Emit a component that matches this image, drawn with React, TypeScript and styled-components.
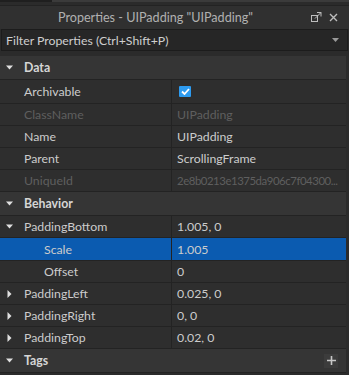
import React from "react";
import styled, { createGlobalStyle } from "styled-components";

const GlobalStyle = createGlobalStyle`
  html, body {
    margin: 0;
    padding: 0;
    background: #2b2b2b;
  }
  body {
    font-family: Lato, "Noto Sans", sans-serif;
    font-size: 12.3px;
  }
`;

const Panel = styled.div`
  width: 349px;
  height: 375px;
  background: #2b2b2b;
  display: flex;
  flex-direction: column;
  overflow: hidden;
`;

const TopStrip = styled.div`
  height: 6px;
  display: flex;
  border-bottom: 1px solid #232323;
  box-sizing: border-box;
`;

const StripPart = styled.div<{ $dark?: boolean }>`
  height: 2px;
  flex: ${(p) => (p.$dark ? "0 0 52px" : "1")};
  background: ${(p) => (p.$dark ? "#1f1f1f" : "#3b3b3b")};
`;

const TitleBar = styled.div`
  height: 23px;
  display: flex;
  align-items: center;
  background: #303030;
  padding: 0 11px 0 0;
`;

const Title = styled.div`
  flex: 1;
  text-align: center;
  color: #b0b0b0;
  font-size: 12.6px;
`;

const TitleIcons = styled.div`
  display: flex;
  align-items: center;
  gap: 7px;
`;

const FilterBox = styled.div`
  height: 22px;
  margin: 0 1px;
  box-sizing: border-box;
  border: 1px solid #1c1c1c;
  background: #262626;
  display: flex;
  align-items: center;
  padding: 0 8px 0 4px;
  color: #cfcfcf;
`;

const FilterText = styled.div`
  flex: 1;
`;

const Gap = styled.div`
  height: 5px;
`;

const Grid = styled.div`
  display: flex;
  flex-direction: column;
  width: 346px;
`;

const CategoryRow = styled.div`
  height: 24px;
  box-sizing: border-box;
  border-bottom: 1px solid #232323;
  background: #353535;
  display: flex;
  align-items: center;
  color: #d6d6d6;
  font-weight: 700;
`;

const ArrowSlot = styled.div`
  width: 24px;
  display: flex;
  justify-content: center;
  padding-right: 5px;
  box-sizing: border-box;
`;

const Row = styled.div<{ $selected?: boolean; $tall?: boolean }>`
  height: ${(p) => (p.$tall ? "24px" : p.$selected ? "23px" : "22px")};
  box-sizing: border-box;
  border-bottom: 1px solid #232323;
  background: ${(p) => (p.$selected ? "#0b5bb0" : "#2e2e2e")};
  display: flex;
`;

const NameCell = styled.div<{ $indent?: number; $disabled?: boolean }>`
  width: 172px;
  box-sizing: border-box;
  border-right: 1px solid #232323;
  display: flex;
  align-items: center;
  padding-left: ${(p) => (p.$indent ? p.$indent : 0)}px;
  color: ${(p) => (p.$disabled ? "#5f5f5f" : "#cccccc")};
`;

const ValueCell = styled.div<{ $disabled?: boolean; $compact?: boolean }>`
  flex: 1;
  min-width: 0;
  display: flex;
  align-items: center;
  padding-left: 5px;
  color: ${(p) => (p.$disabled ? "#5f5f5f" : "#cccccc")};
  white-space: nowrap;
  font-size: ${(p) => (p.$compact ? "11.4px" : "inherit")};
  letter-spacing: ${(p) => (p.$compact ? "-0.45px" : "normal")};
`;

const Check = styled.div`
  width: 12px;
  height: 11px;
  margin-left: 2px;
  background: #2d9bf0;
  border-radius: 1px;
  display: flex;
  align-items: center;
  justify-content: center;
`;

const PlusButton = styled.div`
  margin-left: auto;
  margin-right: 8px;
  width: 14px;
  height: 14px;
  display: flex;
  align-items: center;
  justify-content: center;
  background: #3c3c3c;
`;

const Down = () => (
  <svg width="7" height="5" viewBox="0 0 7 5">
    <path d="M0 0.5 H7 L3.5 4.5 Z" fill="#e0e0e0" />
  </svg>
);

const Right = () => (
  <svg width="5" height="8" viewBox="0 0 5 8">
    <path d="M0.5 0 V8 L4.5 4 Z" fill="#e0e0e0" />
  </svg>
);

type Prop = {
  name: string;
  value?: string;
  disabled?: boolean;
  indent?: number;
  arrow?: "down" | "right";
  selected?: boolean;
  check?: boolean;
  compact?: boolean;
};

const PropRow = ({ p }: { p: Prop }) => (
  <Row $selected={p.selected} $tall={p.check}>
    <NameCell $indent={p.arrow ? 0 : p.indent ?? 24} $disabled={p.disabled}>
      {p.arrow && <ArrowSlot>{p.arrow === "down" ? <Down /> : <Right />}</ArrowSlot>}
      {p.name}
    </NameCell>
    <ValueCell $disabled={p.disabled} $compact={p.compact}>
      {p.check ? (
        <Check>
          <svg width="9" height="7" viewBox="0 0 9 7">
            <path d="M1 3.5 L3.5 6 L8 1" stroke="#fff" strokeWidth="1.8" fill="none" />
          </svg>
        </Check>
      ) : (
        p.value
      )}
    </ValueCell>
  </Row>
);

const Category = ({ name, plus }: { name: string; plus?: boolean }) => (
  <CategoryRow>
    <ArrowSlot>
      <Down />
    </ArrowSlot>
    {name}
    {plus && (
      <PlusButton>
        <svg width="9" height="9" viewBox="0 0 9 9">
          <path d="M4.5 0 V9 M0 4.5 H9" stroke="#c8c8c8" strokeWidth="1.6" />
        </svg>
      </PlusButton>
    )}
  </CategoryRow>
);

const dataProps: Prop[] = [
  { name: "Archivable", check: true },
  { name: "ClassName", value: "UIPadding", disabled: true },
  { name: "Name", value: "UIPadding" },
  { name: "Parent", value: "ScrollingFrame" },
  { name: "UniqueId", value: "2e8b0213e1375da906c7f04300...", disabled: true, compact: true },
];

const behaviorProps: Prop[] = [
  { name: "PaddingBottom", value: "1.005, 0", arrow: "down" },
  { name: "Scale", value: "1.005", indent: 44, selected: true },
  { name: "Offset", value: "0", indent: 44 },
  { name: "PaddingLeft", value: "0.025, 0", arrow: "right" },
  { name: "PaddingRight", value: "0, 0", arrow: "right" },
  { name: "PaddingTop", value: "0.02, 0", arrow: "right" },
];

export default function App() {
  return (
    <>
      <GlobalStyle />
      <Panel>
        <TopStrip>
          <StripPart $dark />
          <StripPart />
        </TopStrip>
        <TitleBar>
          <Title>Properties - UIPadding "UIPadding"</Title>
          <TitleIcons>
            <svg width="11" height="11" viewBox="0 0 11 11">
              <rect x="0.5" y="3.5" width="6" height="6" stroke="#bdbdbd" fill="none" />
              <path d="M4 6.5 L10 0.5 M6 0.5 H10 V4.5" stroke="#bdbdbd" fill="none" />
            </svg>
            <svg width="9" height="9" viewBox="0 0 9 9">
              <path d="M1 1 L8 8 M8 1 L1 8" stroke="#bdbdbd" strokeWidth="1.4" />
            </svg>
          </TitleIcons>
        </TitleBar>
        <FilterBox>
          <FilterText>Filter Properties (Ctrl+Shift+P)</FilterText>
          <svg width="7" height="4" viewBox="0 0 7 4">
            <path d="M0 0 H7 L3.5 4 Z" fill="#9a9a9a" />
          </svg>
        </FilterBox>
        <Gap />
        <Grid>
          <Category name="Data" />
          {dataProps.map((p) => (
            <PropRow key={p.name} p={p} />
          ))}
          <Category name="Behavior" />
          {behaviorProps.map((p) => (
            <PropRow key={p.name} p={p} />
          ))}
          <Category name="Tags" plus />
        </Grid>
      </Panel>
    </>
  );
}
